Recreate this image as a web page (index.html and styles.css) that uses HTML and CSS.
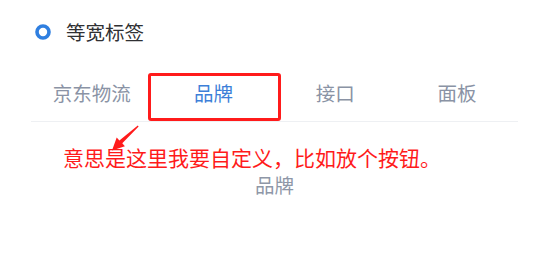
FILE: index.html
```html
<!DOCTYPE html>
<html lang="zh-CN">
<head>
<meta charset="utf-8">
<title>等宽标签</title>
<link rel="stylesheet" href="styles.css">
</head>
<body>
<div class="page">
  <div class="header">
    <svg class="ring" width="16" height="16" viewBox="0 0 16 16">
      <circle cx="8" cy="8" r="6" fill="none" stroke="#2f7fe0" stroke-width="3.6"/>
    </svg>
    <span class="title">等宽标签</span>
  </div>
  <div class="tabs">
    <div class="tab">京东物流</div>
    <div class="tab active">品牌</div>
    <div class="tab">接口</div>
    <div class="tab">面板</div>
  </div>
  <div class="panel">品牌</div>

  <div class="mark-box"></div>
  <svg class="mark-arrow" width="555" height="262" viewBox="0 0 555 262">
    <polygon points="138.6,126.4 122.3,143.3 124.9,146.3 112,150.5 116.7,137.5 119.4,140.4 137.8,125.6" fill="#ff1b1b"/>
  </svg>
  <div class="mark-note">意思是这里我要自定义，比如放个按钮。</div>
</div>
</body>
</html>
```

FILE: styles.css
```css
html, body {
  margin: 0;
  padding: 0;
  background: #ffffff;
}

body {
  font-family: "Noto Sans CJK SC", "Noto Sans", sans-serif;
}

.page {
  position: relative;
  width: 555px;
  height: 262px;
  overflow: hidden;
}

.header {
  display: flex;
  align-items: center;
  gap: 15px;
  padding: 18px 0 0 35px;
  height: 28px;
}

.ring {
  display: block;
  flex: none;
}

.title {
  font-size: 19.5px;
  line-height: 28px;
  color: #2f3033;
}

.tabs {
  display: grid;
  grid-template-columns: repeat(4, 1fr);
  margin: 27px 0 0 31px;
  width: 487px;
  border-bottom: 1px solid #eef0f3;
}

.tab {
  position: relative;
  text-align: center;
  font-size: 19.5px;
  line-height: 28px;
  padding: 6px 0 14px;
  color: #8a93a5;
}

.tab.active {
  color: #3d7fd8;
}

.tab.active::after {
  content: "";
  position: absolute;
  left: 0;
  right: 0;
  bottom: 2px;
  height: 1px;
  background: #d6dde8;
}

.panel {
  width: 487px;
  margin-left: 31px;
  padding-top: 53px;
  text-align: center;
  font-size: 19.5px;
  line-height: 20px;
  color: #8e97a7;
}

/* annotation overlays */
.mark-box {
  position: absolute;
  left: 148px;
  top: 73px;
  width: 127px;
  height: 42px;
  border: 3px solid #ff1b1b;
  border-radius: 3px;
}

.mark-arrow {
  position: absolute;
  left: 0;
  top: 0;
}

.mark-note {
  position: absolute;
  left: 63px;
  top: 146px;
  font-size: 21px;
  line-height: 22px;
  color: #ff1b1b;
  white-space: nowrap;
}
```
